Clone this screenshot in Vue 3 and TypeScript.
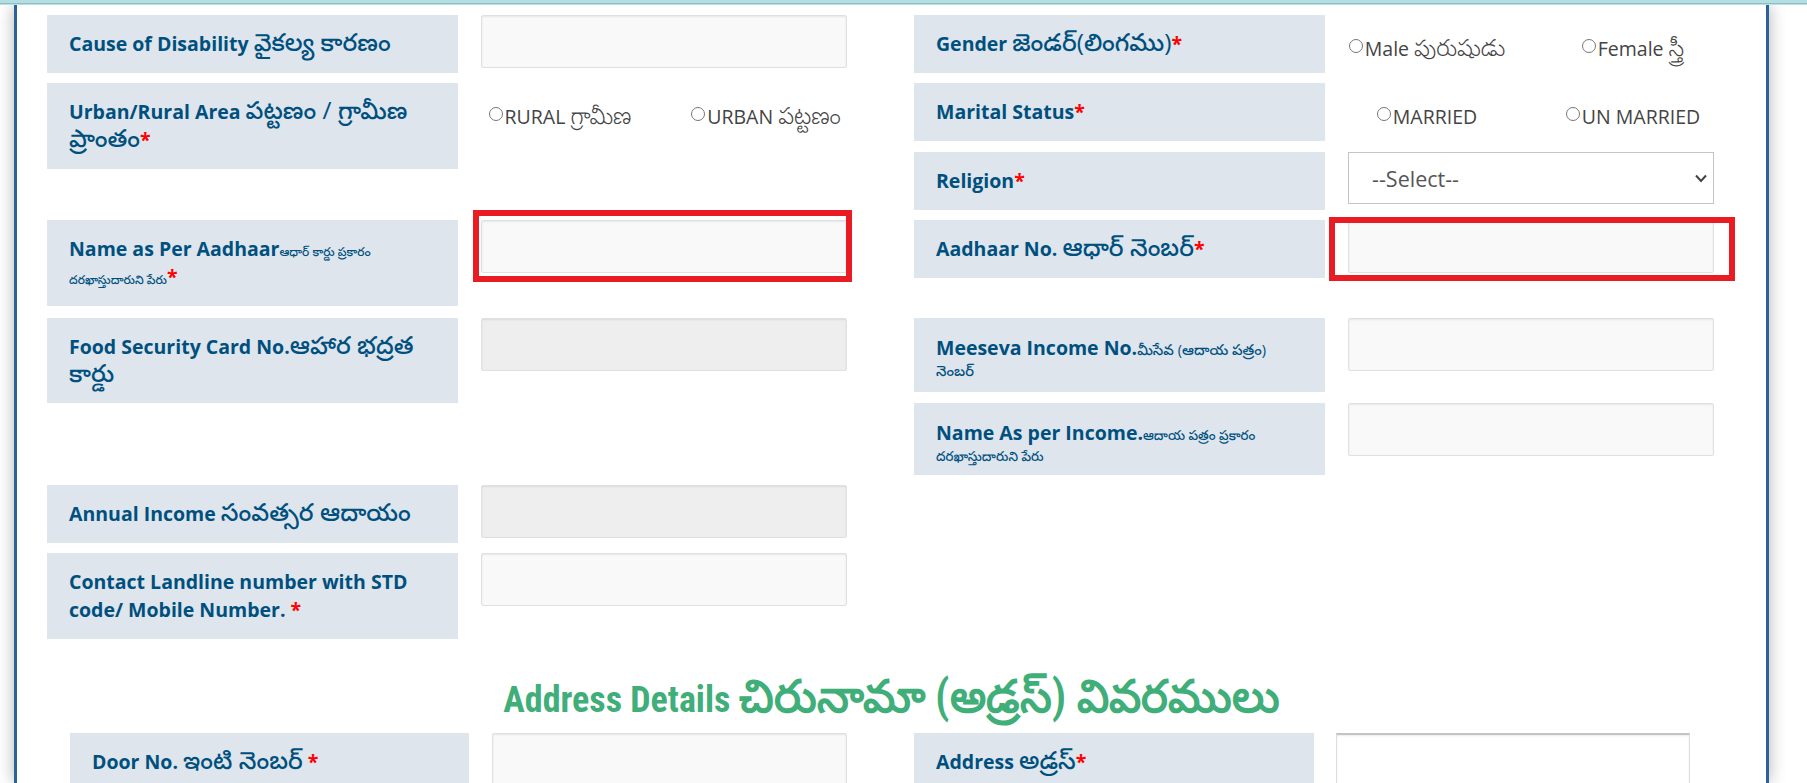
<script setup lang="ts">
interface Option {
  text: string
  te?: string
}

interface Row {
  name: string
  telugu?: string
  small?: string
  small2?: string
  smallClass?: string
  star?: boolean
  starGap?: boolean
  gap: number
  height: number
  field: 'input' | 'readonly' | 'radio' | 'select'
  options?: Option[]
  mark?: boolean
}

const left: Row[] = [
  { name: 'Cause of Disability ', telugu: 'వైకల్య కారణం', gap: 0, height: 58, field: 'input' },
  { name: 'Urban/Rural Area ', telugu: 'పట్టణం / గ్రామీణ ప్రాంతం', star: true, gap: 10, height: 86, field: 'radio', options: [{ text: 'RURAL ', te: 'గ్రామీణ' }, { text: 'URBAN ', te: 'పట్టణం' }] },
  { name: 'Name as Per Aadhaar', small: 'ఆధార్ కార్డు ప్రకారం', small2: 'దరఖాస్తుదారుని పేరు', star: true, gap: 51, height: 86, field: 'input', mark: true },
  { name: 'Food Security Card No.', telugu: 'ఆహార భద్రత కార్డు', gap: 12, height: 85, field: 'readonly' },
  { name: 'Annual Income ', telugu: 'సంవత్సర ఆదాయం', gap: 82, height: 58, field: 'readonly' },
  { name: 'Contact Landline number with STD code/ Mobile Number.', star: true, starGap: true, gap: 10, height: 86, field: 'input' },
]

const right: Row[] = [
  { name: 'Gender ', telugu: 'జెండర్(లింగము)', star: true, gap: 0, height: 58, field: 'radio', options: [{ text: 'Male ', te: 'పురుషుడు' }, { text: 'Female ', te: 'స్త్రీ' }] },
  { name: 'Marital Status', star: true, gap: 10, height: 58, field: 'radio', options: [{ text: 'MARRIED' }, { text: 'UN MARRIED' }] },
  { name: 'Religion', star: true, gap: 11, height: 58, field: 'select' },
  { name: 'Aadhaar No. ', telugu: 'ఆధార్ నెంబర్', star: true, gap: 10, height: 58, field: 'input', mark: true },
  { name: 'Meeseva Income No.', small: 'మీసేవ (ఆదాయ పత్రం)', small2: 'నెంబర్', smallClass: 'small-lg', gap: 40, height: 74, field: 'input' },
  { name: 'Name As per Income.', small: 'ఆదాయ పత్రం ప్రకారం', small2: 'దరఖాస్తుదారుని పేరు', smallClass: 'small-md', gap: 11, height: 72, field: 'input' },
]

const columns = [
  { key: 'left', rows: left },
  { key: 'right', rows: right },
]

const rowStyle = (row: Row) => ({ marginTop: `${row.gap}px`, height: `${row.height}px` })
</script>

<template>
  <div class="page">
    <div class="topbar"></div>
    <main class="sheet">
      <section class="columns">
        <div v-for="col in columns" :key="col.key" class="col" :class="col.key">
          <div v-for="row in col.rows" :key="row.name" class="row" :style="rowStyle(row)">
            <div class="label" :class="{ compact: !!row.small && col.key === 'right' }">
              <span>{{ row.name }}</span><span v-if="row.telugu" class="te">{{ row.telugu }}</span><span v-if="row.small" class="small" :class="row.smallClass">{{ row.small }}</span><br v-if="row.small2" /><span v-if="row.small2" class="small" :class="row.smallClass">{{ row.small2 }}</span><span v-if="row.star" class="star">{{ row.starGap ? ' *' : '*' }}</span>
            </div>
            <div class="field" :class="{ marked: row.mark }">
              <input v-if="row.field === 'input'" class="control" type="text" />
              <input v-else-if="row.field === 'readonly'" class="control readonly" type="text" readonly />
              <template v-else-if="row.field === 'select'">
                <select class="control select">
                  <option>--Select--</option>
                </select>
                <svg class="chevron" viewBox="0 0 12 9" width="12" height="9" aria-hidden="true">
                  <path d="M1 1.5 L6 7 L11 1.5" fill="none" stroke="#444" stroke-width="2" />
                </svg>
              </template>
              <div v-else class="radios">
                <label v-for="opt in row.options" :key="opt.text" class="radio">
                  <input type="radio" :name="row.name" /><span>{{ opt.text }}<span v-if="opt.te" class="te">{{ opt.te }}</span></span>
                </label>
              </div>
            </div>
          </div>
        </div>
      </section>

      <h2 class="heading">Address Details <span class="heading-te">చిరునామా (అడ్రస్) వివరములు</span></h2>

      <section class="address">
        <div class="addr-row door">
          <div class="label"><span>Door No. </span><span class="te">ఇంటి నెంబర్</span><span class="star"> *</span></div>
          <input class="control" type="text" />
        </div>
        <div class="addr-row place">
          <div class="label"><span>Address </span><span class="te">అడ్రస్</span><span class="star">*</span></div>
          <input class="control plain" type="text" />
        </div>
      </section>
    </main>
  </div>
</template>

<style>
html,
body {
  margin: 0;
  padding: 0;
  background: #fff;
  overflow: hidden;
}
</style>

<style scoped>
.page {
  width: 1807px;
  height: 783px;
  overflow: hidden;
  font-family: "Open Sans", "Noto Sans", "Noto Sans Telugu", sans-serif;
  background: #fff;
}
.topbar {
  position: relative;
  z-index: 1;
  height: 5px;
  background: linear-gradient(to bottom, #b5dee2 0 3px, #8dbfc3 3px 4px, #b5e2e6 4px 5px);
}
.sheet {
  box-sizing: border-box;
  width: 1755px;
  height: 778px;
  margin-left: 14px;
  border-left: 3px solid #2a6496;
  border-right: 3px solid #2a6496;
  box-shadow: 0 0 16px rgba(0, 0, 0, 0.3);
  background: #fff;
  padding-top: 10px;
}
.columns {
  display: flex;
  height: 660px;
}
.col {
  box-sizing: border-box;
}
.left {
  width: 897px;
  padding-left: 30px;
}
.row {
  display: flex;
  align-items: flex-start;
}
.left .row {
  width: 800px;
}
.label {
  box-sizing: border-box;
  width: 411px;
  height: 100%;
  padding: 15px 22px 0;
  background: #dee5ec;
  color: #00507f;
  font-size: 19.5px;
  font-weight: 700;
  line-height: 28px;
}
.label.compact {
  padding-top: 19px;
  line-height: 21px;
}
.te {
  font-size: 24.5px;
  font-weight: 500;
  line-height: 0;
}
.radio .te {
  font-size: 23px;
  font-weight: 300;
}
.small {
  font-size: 12px;
  font-weight: 500;
  line-height: 0;
}
.small-lg {
  font-size: 14.5px;
}
.small-md {
  font-size: 13.2px;
}
.star {
  color: #f00;
  white-space: pre;
}
.field {
  position: relative;
  width: 366px;
  margin-left: 23px;
}
.control {
  display: block;
  box-sizing: border-box;
  width: 100%;
  height: 53px;
  border: 1px solid #e0e0e0;
  border-radius: 2px;
  background: #f9f9f9;
  box-shadow: inset 0 1px 2px rgba(0, 0, 0, 0.08);
  margin: 0;
  padding: 0 24px;
  font-family: inherit;
}
.readonly {
  background: #eee;
}
.select {
  appearance: none;
  height: 52px;
  padding-left: 23px;
  border: 1px solid #c4c4c4;
  border-radius: 0;
  background-color: #fff;
  color: #555;
  font-size: 21.5px;
  box-shadow: none;
}
.chevron {
  position: absolute;
  left: 347px;
  top: 22px;
}
.plain {
  background: #fff;
  border: 1px solid #ddd;
  border-top: 2px solid #c4c4c4;
  border-radius: 0;
}
.marked::after {
  content: "";
  position: absolute;
  left: -8px;
  right: -5px;
  top: -10px;
  height: 60px;
  border: 6px solid #e91c23;
  pointer-events: none;
}
.right .marked::after {
  left: -19px;
  right: -21px;
  top: -3px;
  height: 52px;
}
.radios {
  display: grid;
  grid-template-columns: 206px 206px;
  justify-items: center;
  margin-left: -24px;
  padding-top: 20px;
  color: #444;
  font-size: 19.5px;
  line-height: 28px;
}
.radio {
  display: inline-flex;
  font-weight: 400;
  white-space: nowrap;
}
.radio input {
  width: 14px;
  height: 14px;
  margin: 4px 2px 0 0;
}
.heading {
  margin: 0;
  text-align: center;
  color: #3fae78;
  font-family: "Roboto Condensed", Roboto, "Noto Sans", sans-serif;
  font-size: 36px;
  font-stretch: condensed;
  font-weight: 700;
  line-height: 50px;
}
.heading-te {
  font-size: 45.3px;
  font-weight: 600;
  line-height: 0;
}
.address {
  display: flex;
  margin-top: 8px;
  padding-left: 53px;
}
.addr-row {
  display: flex;
  height: 60px;
}
.door .label {
  width: 399px;
}
.door .control {
  width: 355px;
  margin-left: 23px;
  height: 60px;
}
.place {
  margin-left: 67px;
}
.place .label {
  width: 400px;
}
.place .control {
  width: 354px;
  margin-left: 22px;
  height: 60px;
}
</style>
